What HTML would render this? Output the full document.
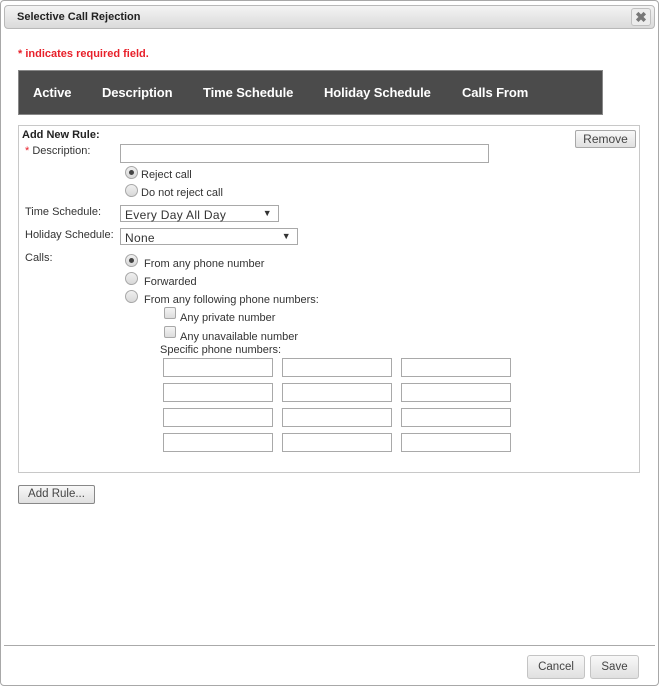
<!DOCTYPE html>
<html><head><meta charset="utf-8"><style>
*{box-sizing:border-box;margin:0;padding:0}
body{width:659px;height:686px;background:#fff;font-family:"Liberation Sans",Arial,sans-serif;font-size:11px;color:#333;position:relative;overflow:hidden}
.a{position:absolute;white-space:nowrap}
.dlg{left:0;top:0;width:659px;height:686px;border:1px solid #a8a8a8;border-radius:4px}
.tb{left:4px;top:5px;width:651px;height:24px;border:1px solid #b8b8b8;border-radius:4px;background:linear-gradient(#f4f4f4,#dadada)}
.btn{position:absolute;border:1px solid #a8a8a8;border-radius:2px;background:linear-gradient(#f8f8f8,#e0e0e0);color:#444;text-align:center;font-size:12px}
.inp{position:absolute;border:1px solid #a9a9a9;background:#fff}
.rad{position:absolute;width:13px;height:13px;border-radius:50%;border:1px solid #a8a8a8;background:linear-gradient(#f0f0f0,#d8d8d8)}
.rad.on::after{content:"";position:absolute;left:3px;top:3px;width:5px;height:5px;border-radius:50%;background:#444}
.chk{position:absolute;width:12px;height:12px;border:1px solid #a8a8a8;border-radius:2px;background:linear-gradient(#f4f4f4,#dcdcdc)}
.hd{color:#fff;font-weight:bold;font-size:13px;top:85px;letter-spacing:-0.1px}
.sel{position:absolute;border:1px solid #a9a9a9;background:#fff;font-size:12px;padding:2px 0 0 4px;color:#333;letter-spacing:.3px}
.sel span{position:absolute;right:6px;top:2px;font-size:9px}
</style></head><body>
<div class="a dlg"></div>
<div class="a tb"></div>
<div class="a" style="left:17px;top:11px;font-weight:bold;font-size:11px;color:#222">Selective Call Rejection</div>
<div class="a" style="left:631px;top:8px;width:20px;height:18px;border:1px solid #c0c0c0;border-radius:3px;background:#ececec;color:#777;font-size:14px;font-weight:bold;text-align:center;line-height:16px">✖</div>
<div class="a" style="left:18px;top:48px;color:#e8202a;font-weight:bold;font-size:11px">* indicates required field.</div>
<div class="a" style="left:18px;top:70px;width:585px;height:45px;background:#4b4b4b;border:1px solid #888"></div>
<div class="a hd" style="left:33px">Active</div>
<div class="a hd" style="left:102px">Description</div>
<div class="a hd" style="left:203px">Time Schedule</div>
<div class="a hd" style="left:324px">Holiday Schedule</div>
<div class="a hd" style="left:462px">Calls From</div>
<div class="a" style="left:18px;top:125px;width:622px;height:348px;border:1px solid #c8c8c8"></div>
<div class="a" style="left:22px;top:129px;font-weight:bold;color:#222">Add New Rule:</div>
<div class="btn" style="left:575px;top:130px;width:61px;height:18px;line-height:16px">Remove</div>
<div class="a" style="left:25px;top:145px"><span style="color:#e8202a">*</span> Description:</div>
<div class="inp" style="left:120px;top:144px;width:369px;height:19px"></div>
<div class="rad on" style="left:125px;top:166px"></div><div class="a" style="left:141px;top:169px">Reject call</div>
<div class="rad" style="left:125px;top:184px"></div><div class="a" style="left:141px;top:187px">Do not reject call</div>
<div class="a" style="left:25px;top:206px">Time Schedule:</div>
<div class="sel" style="left:120px;top:205px;width:159px;height:17px">Every Day All Day<span>▼</span></div>
<div class="a" style="left:25px;top:229px">Holiday Schedule:</div>
<div class="sel" style="left:120px;top:228px;width:178px;height:17px">None<span>▼</span></div>
<div class="a" style="left:25px;top:252px">Calls:</div>
<div class="rad on" style="left:125px;top:254px"></div><div class="a" style="left:144px;top:258px">From any phone number</div>
<div class="rad" style="left:125px;top:272px"></div><div class="a" style="left:144px;top:276px">Forwarded</div>
<div class="rad" style="left:125px;top:290px"></div><div class="a" style="left:144px;top:294px">From any following phone numbers:</div>
<div class="chk" style="left:164px;top:307px"></div><div class="a" style="left:180px;top:312px">Any private number</div>
<div class="chk" style="left:164px;top:326px"></div><div class="a" style="left:180px;top:331px">Any unavailable number</div>
<div class="a" style="left:160px;top:344px">Specific phone numbers:</div>
<div class="inp" style="left:163px;top:358px;width:110px;height:19px"></div><div class="inp" style="left:282px;top:358px;width:110px;height:19px"></div><div class="inp" style="left:401px;top:358px;width:110px;height:19px"></div>
<div class="inp" style="left:163px;top:383px;width:110px;height:19px"></div><div class="inp" style="left:282px;top:383px;width:110px;height:19px"></div><div class="inp" style="left:401px;top:383px;width:110px;height:19px"></div>
<div class="inp" style="left:163px;top:408px;width:110px;height:19px"></div><div class="inp" style="left:282px;top:408px;width:110px;height:19px"></div><div class="inp" style="left:401px;top:408px;width:110px;height:19px"></div>
<div class="inp" style="left:163px;top:433px;width:110px;height:19px"></div><div class="inp" style="left:282px;top:433px;width:110px;height:19px"></div><div class="inp" style="left:401px;top:433px;width:110px;height:19px"></div>
<div class="btn" style="left:18px;top:485px;width:77px;height:19px;line-height:17px;border-color:#888;font-size:11.5px">Add Rule...</div>
<div class="a" style="left:4px;top:645px;width:651px;height:1px;background:#aaa"></div>
<div class="btn" style="left:527px;top:655px;width:58px;height:24px;line-height:22px;border-radius:3px;border-color:#c4c4c4;font-size:11.5px">Cancel</div>
<div class="btn" style="left:590px;top:655px;width:49px;height:24px;line-height:22px;border-radius:3px;border-color:#c4c4c4;font-size:11.5px">Save</div>
</body></html>
